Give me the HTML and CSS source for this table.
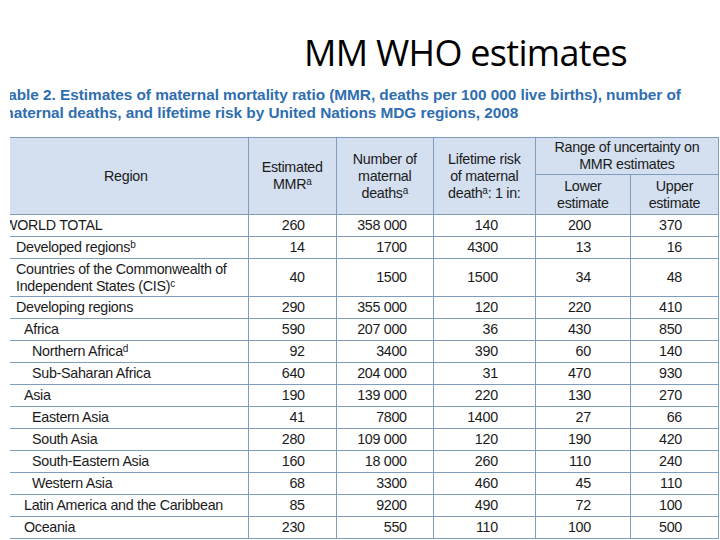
FILE: index.html
```html
<!DOCTYPE html>
<html lang="en">
<head>
    <meta charset="UTF-8">
    <meta name="viewport" content="width=device-width, initial-scale=1.0">
    <title>MM WHO estimates</title>
    <link rel="stylesheet" href="styles.css">
</head>
<body>
    <h1 class="title">MM WHO estimates</h1>

    <div class="crop">
        <div class="figure">
            <p class="caption">
                Table 2. Estimates of maternal mortality ratio (MMR, deaths per 100 000 live births), number of<br>
                maternal deaths, and lifetime risk by United Nations MDG regions, 2008
            </p>

            <table class="mmr">
                <colgroup>
                    <col class="c-region">
                    <col class="c-mmr">
                    <col class="c-deaths">
                    <col class="c-risk">
                    <col class="c-lower">
                    <col class="c-upper">
                </colgroup>
                <thead>
                    <tr class="head-top">
                        <th rowspan="2">Region</th>
                        <th rowspan="2">Estimated<br>MMR<sup>a</sup></th>
                        <th rowspan="2">Number of<br>maternal<br>deaths<sup>a</sup></th>
                        <th rowspan="2">Lifetime risk<br>of maternal<br>death<sup>a</sup>: 1 in:</th>
                        <th colspan="2">Range of uncertainty on<br>MMR estimates</th>
                    </tr>
                    <tr class="head-sub">
                        <th>Lower<br>estimate</th>
                        <th>Upper<br>estimate</th>
                    </tr>
                </thead>
                <tbody>
                    <tr>
                        <td class="lvl0">WORLD TOTAL</td>
                        <td>260</td><td>358 000</td><td>140</td><td>200</td><td>370</td>
                    </tr>
                    <tr>
                        <td class="lvl1">Developed regions<sup>b</sup></td>
                        <td>14</td><td>1700</td><td>4300</td><td>13</td><td>16</td>
                    </tr>
                    <tr class="tall">
                        <td class="lvl1">Countries of the Commonwealth of<br>Independent States (CIS)<sup>c</sup></td>
                        <td>40</td><td>1500</td><td>1500</td><td>34</td><td>48</td>
                    </tr>
                    <tr>
                        <td class="lvl1">Developing regions</td>
                        <td>290</td><td>355 000</td><td>120</td><td>220</td><td>410</td>
                    </tr>
                    <tr>
                        <td class="lvl2">Africa</td>
                        <td>590</td><td>207 000</td><td>36</td><td>430</td><td>850</td>
                    </tr>
                    <tr>
                        <td class="lvl3">Northern Africa<sup>d</sup></td>
                        <td>92</td><td>3400</td><td>390</td><td>60</td><td>140</td>
                    </tr>
                    <tr>
                        <td class="lvl3">Sub-Saharan Africa</td>
                        <td>640</td><td>204 000</td><td>31</td><td>470</td><td>930</td>
                    </tr>
                    <tr>
                        <td class="lvl2">Asia</td>
                        <td>190</td><td>139 000</td><td>220</td><td>130</td><td>270</td>
                    </tr>
                    <tr>
                        <td class="lvl3">Eastern Asia</td>
                        <td>41</td><td>7800</td><td>1400</td><td>27</td><td>66</td>
                    </tr>
                    <tr>
                        <td class="lvl3">South Asia</td>
                        <td>280</td><td>109 000</td><td>120</td><td>190</td><td>420</td>
                    </tr>
                    <tr>
                        <td class="lvl3">South-Eastern Asia</td>
                        <td>160</td><td>18 000</td><td>260</td><td>110</td><td>240</td>
                    </tr>
                    <tr>
                        <td class="lvl3">Western Asia</td>
                        <td>68</td><td>3300</td><td>460</td><td>45</td><td>110</td>
                    </tr>
                    <tr>
                        <td class="lvl2">Latin America and the Caribbean</td>
                        <td>85</td><td>9200</td><td>490</td><td>72</td><td>100</td>
                    </tr>
                    <tr>
                        <td class="lvl2">Oceania</td>
                        <td>230</td><td>550</td><td>110</td><td>100</td><td>500</td>
                    </tr>
                </tbody>
            </table>
        </div>
    </div>
</body>
</html>
```

FILE: styles.css
```css
html {
    background: #fff;
}

body {
    margin: 0;
    width: 720px;
    height: 540px;
    overflow: hidden;
}

.title {
    margin: 0;
    height: 80px;
    padding: 33px 0 0 304px;
    box-sizing: border-box;
    font-family: "Open Sans", "Noto Sans", sans-serif;
    font-weight: 400;
    font-size: 36px;
    line-height: 40px;
    letter-spacing: -0.7px;
    color: #000;
}

/* the table picture is cut off on the left edge */
.crop {
    margin-left: 10px;
    overflow: hidden;
}

.figure {
    margin-left: -10px;
    padding-top: 6px;
    font-family: "Liberation Sans", Arial, sans-serif;
}

.caption {
    margin: 0 0 15px;
    padding-left: 0;
    font-size: 15.4px;
    line-height: 18px;
    font-weight: bold;
    letter-spacing: -0.05px;
    color: #2f6eb0;
    white-space: nowrap;
}

.mmr {
    margin-left: 4px;
    border-collapse: collapse;
    table-layout: fixed;
    width: 715px;
    font-size: 14.3px;
    letter-spacing: -0.3px;
    color: #1b1b1b;
}

.c-region { width: 244px; }
.c-mmr    { width: 88px; }
.c-deaths { width: 97px; }
.c-risk   { width: 102px; }
.c-lower  { width: 95px; }
.c-upper  { width: 88px; }

.mmr th,
.mmr td {
    border: 1px solid #7f9ebf;
    padding: 0;
}

.mmr tr > :first-child {
    border-left: none;
}

.mmr th {
    background-color: #d4e0ef;
    font-weight: normal;
    line-height: 17px;
    text-align: center;
}

.head-top {
    height: 37px;
}

.head-sub {
    height: 40px;
}

.mmr td {
    height: 21px;
    line-height: 17px;
    text-align: right;
}

.mmr tr.tall td {
    height: 37px;
}

.mmr td:nth-child(2) { padding-right: 31px; }
.mmr td:nth-child(3) { padding-right: 26px; }
.mmr td:nth-child(4) { padding-right: 37px; }
.mmr td:nth-child(5) { padding-right: 39px; }
.mmr td:nth-child(6) { padding-right: 36px; }

.mmr td.lvl0,
.mmr td.lvl1,
.mmr td.lvl2,
.mmr td.lvl3 {
    text-align: left;
}

.lvl0 { padding-left: 4px; }
.lvl1 { padding-left: 12px !important; }
.lvl2 { padding-left: 20px !important; }
.lvl3 { padding-left: 28px !important; }

.mmr sup {
    font-size: 10px;
    line-height: 0;
    vertical-align: 4px;
}
```
